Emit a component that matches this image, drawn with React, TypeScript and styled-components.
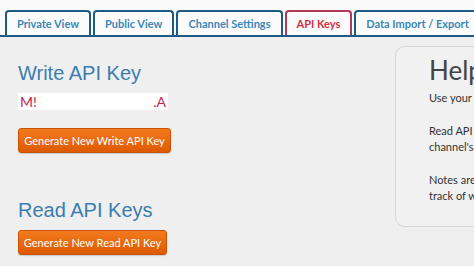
import styled, { createGlobalStyle } from "styled-components";

const GlobalStyle = createGlobalStyle`
  html, body {
    margin: 0;
    padding: 0;
    background: #efefef;
    overflow: hidden;
  }
  #root {
    width: 474px;
    height: 266px;
    overflow: hidden;
  }
`

const Page = styled.div`
  width: 474px;
  height: 266px;
  overflow: hidden;
  background: #efefef;
  font-family: Lato, "Open Sans", sans-serif;
`

const TabBar = styled.div`
  display: flex;
  gap: 2px;
  padding: 10px 0 0 5px;
  background: #fafafa;
  border-bottom: 2px solid #1d5a86;
  height: 25px;
`

const Tab = styled.div<{ $active?: boolean }>`
  display: flex;
  align-items: center;
  flex-shrink: 0;
  padding: 0 10px;
  height: 23px;
  border: 2px solid ${({ $active }) => ($active ? "#b23a58" : "#1d5a86")};
  border-bottom: none;
  border-radius: 4px 4px 0 0;
  background: #fbfbfb;
  color: ${({ $active }) => ($active ? "#d22f43" : "#3a88b8")};
  font-size: 11px;
  font-weight: 700;
  white-space: nowrap;
`

const Body = styled.div`
  display: flex;
  padding: 9px 0 0 18px;
`

const Main = styled.div`
  width: 377px;
  flex-shrink: 0;
  display: flex;
  flex-direction: column;
`

const Heading = styled.h2<{ $top: number }>`
  margin: ${({ $top }) => $top}px 0 0 0;
  font-family: "Liberation Sans", Arial, sans-serif;
  font-weight: 400;
  font-size: 20px;
  line-height: 24px;
  color: #3b7db0;
`

const KeyBox = styled.div`
  display: flex;
  align-items: center;
  width: 150px;
  height: 17px;
  margin-top: 8px;
  padding: 0 2px;
  box-sizing: border-box;
  background: #fff;
  color: #c0284f;
  font-size: 14px;
  font-family: Lato, sans-serif;
  justify-content: space-between;
`

const Button = styled.button<{ $top: number; $w: number }>`
  margin-top: ${({ $top }) => $top}px;
  width: ${({ $w }) => $w}px;
  height: 25px;
  border: 1px solid #c95300;
  border-radius: 3px;
  background: linear-gradient(#f47a1e, #dc5a02);
  color: #fff;
  font-family: Lato, sans-serif;
  font-size: 11px;
  white-space: nowrap;
  padding: 0;
  cursor: pointer;
  box-shadow: 0 1px 1px rgba(0, 0, 0, 0.15);
`

const HelpPanel = styled.div`
  flex-shrink: 0;
  width: 260px;
  height: 181px;
  box-sizing: border-box;
  border: 1px solid #d6d6d6;
  border-radius: 10px;
  background: #f1f1f1;
  padding: 7px 0 0 33px;
  color: #333;
  font-family: Lato, sans-serif;
  font-size: 11px;
  line-height: 16px;
`

const HelpTitle = styled.div`
  font-size: 26px;
  line-height: 32px;
  color: #444;
  font-weight: 400;
  margin-bottom: 4px;
`

const HelpText = styled.p`
  margin: 0 0 17px 0;
  white-space: nowrap;
`

export default function App() {
  return (
    <Page>
      <GlobalStyle />
      <TabBar>
        <Tab>Private View</Tab>
        <Tab>Public View</Tab>
        <Tab>Channel Settings</Tab>
        <Tab $active>API Keys</Tab>
        <Tab>Data Import / Export</Tab>
      </TabBar>
      <Body>
        <Main>
          <Heading $top={15}>Write API Key</Heading>
          <KeyBox>
            <span>M!</span>
            <span>.A</span>
          </KeyBox>
          <Button $top={18} $w={153}>Generate New Write API Key</Button>
          <Heading $top={45}>Read API Keys</Heading>
          <Button $top={8} $w={149}>Generate New Read API Key</Button>
        </Main>
        <HelpPanel>
          <HelpTitle>Help</HelpTitle>
          <HelpText>Use your API keys to read and write data.</HelpText>
          <HelpText>
            Read API Keys enable others to read your
            <br />
            channel's private feeds and charts.
          </HelpText>
          <HelpText>
            Notes are useful for keeping
            <br />
            track of who has each key.
          </HelpText>
        </HelpPanel>
      </Body>
    </Page>
  )
}
